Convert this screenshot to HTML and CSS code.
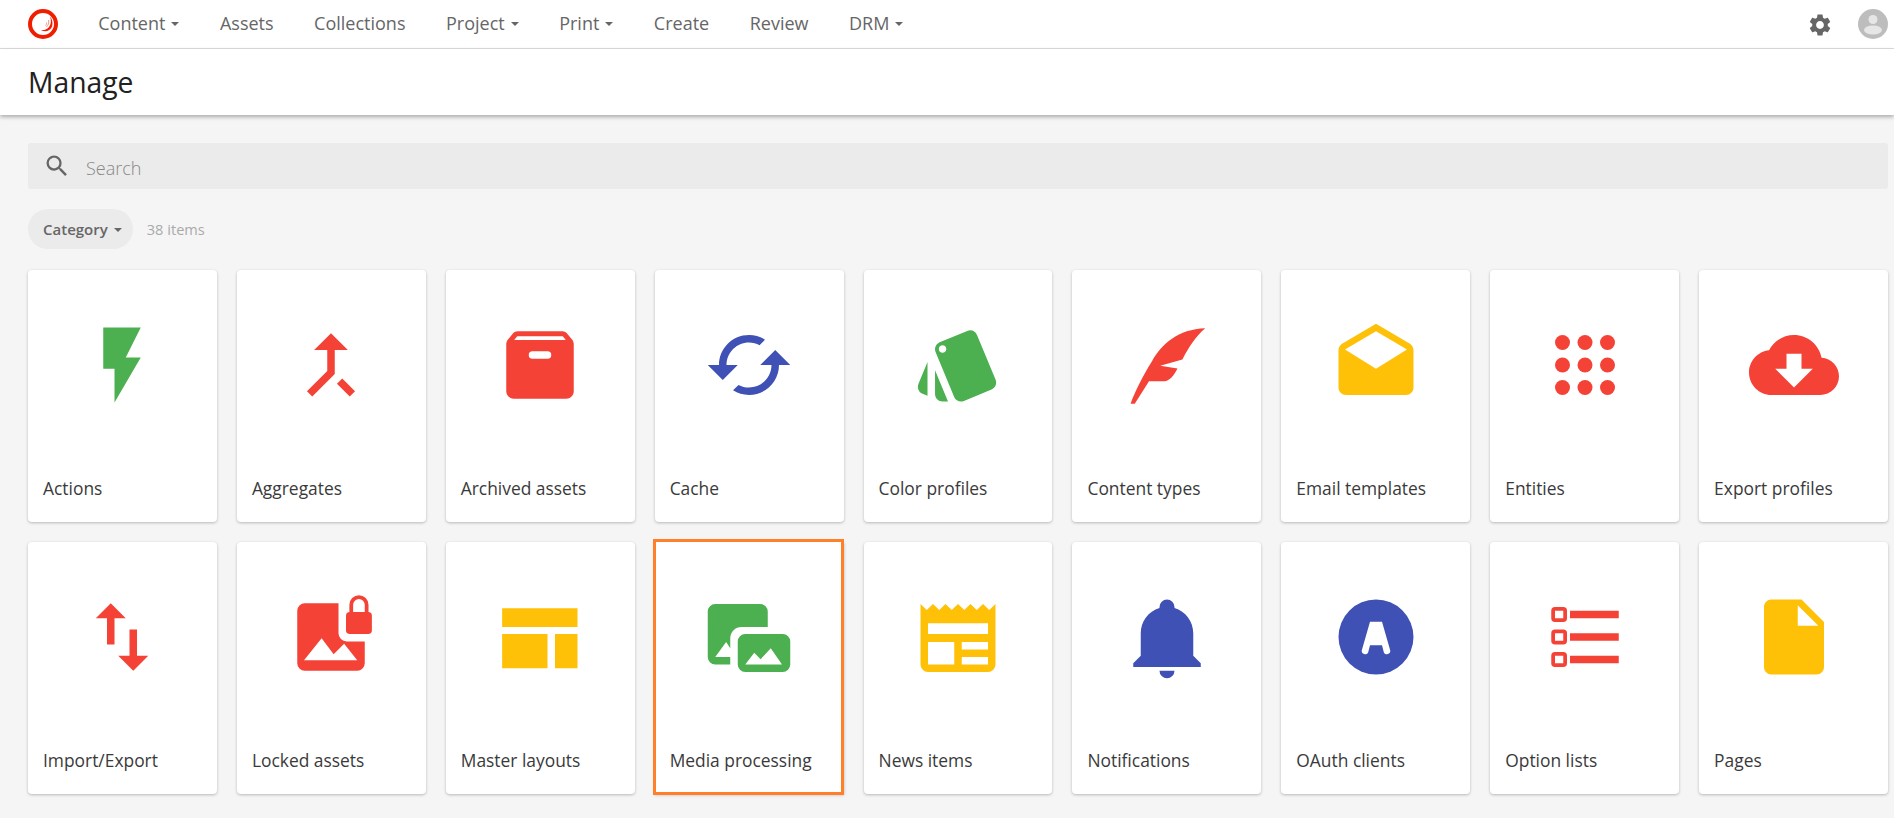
FILE: index.html
```html
<!DOCTYPE html>
<html lang="en">
<head>
<meta charset="utf-8">
<title>Manage</title>
<link rel="stylesheet" href="styles.css">
</head>
<body>
<header class="topbar">
  <svg class="logo" viewBox="0 0 30 30"><circle cx="15" cy="15" r="13" class="logo-ring"/><path class="logo-swirl" d="M22 7.500c1.500 3.500 1.200 7.500-.8 10.200-1.900 2.500-5 3.800-8.200 3.300 3.800 2.300 8.400 1.200 10.300-2 2-3.300 1.500-8.300-1.300-11.500z"/><path class="logo-swirl-line" d="M20.500 11c.6 2.800-.2 5.400-2 7M18.500 13.500c.2 1.300-.2 2.600-1 3.400"/></svg>
  <nav class="nav">
    <a class="nav-item">Content<i class="caret"></i></a>
    <a class="nav-item">Assets</a>
    <a class="nav-item">Collections</a>
    <a class="nav-item">Project<i class="caret"></i></a>
    <a class="nav-item">Print<i class="caret"></i></a>
    <a class="nav-item">Create</a>
    <a class="nav-item">Review</a>
    <a class="nav-item">DRM<i class="caret"></i></a>
  </nav>
  <div class="top-actions">
    <svg class="gear" viewBox="0 0 24 24"><path d="M19.14 12.94c.04-.3.06-.61.06-.94 0-.32-.02-.64-.07-.94l2.03-1.58c.18-.14.23-.41.12-.61l-1.92-3.32c-.12-.22-.37-.29-.59-.22l-2.39.96c-.5-.38-1.03-.7-1.62-.94L14.4 2.81c-.04-.24-.24-.41-.48-.41h-3.84c-.24 0-.43.17-.47.41L9.25 5.35c-.59.24-1.13.57-1.62.94l-2.39-.96c-.22-.08-.47 0-.59.22L2.74 8.87c-.12.21-.08.47.12.61l2.03 1.58c-.05.3-.09.63-.09.94s.02.64.07.94l-2.03 1.58c-.18.14-.23.41-.12.61l1.92 3.32c.12.22.37.29.59.22l2.39-.96c.5.38 1.03.7 1.62.94l.36 2.54c.05.24.24.41.48.41h3.84c.24 0 .44-.17.47-.41l.36-2.54c.59-.24 1.13-.56 1.62-.94l2.39.96c.22.08.47 0 .59-.22l1.92-3.32c.12-.22.07-.47-.12-.61l-2.01-1.58zM12 15.600c-1.980 0-3.600-1.620-3.600-3.600s1.620-3.600 3.600-3.600 3.600 1.620 3.600 3.600-1.620 3.600-3.600 3.600z"/></svg>
    <svg class="avatar" viewBox="0 0 30 30"><circle class="avatar-bg" cx="15" cy="15" r="15"/><circle class="avatar-fg" cx="15" cy="10.500" r="4.500"/><ellipse class="avatar-fg" cx="15" cy="21" rx="9" ry="4.500"/></svg>
  </div>
</header>
<div class="titlebar"><h1 class="title">Manage</h1></div>
<main class="content">
  <div class="search">
    <svg class="search-icon" viewBox="0 0 24 24"><path d="M15.5 14h-.79l-.28-.27A6.470 6.470 0 0 0 16 9.500 6.500 6.500 0 1 0 9.500 16c1.610 0 3.090-.59 4.230-1.570l.27.28v.79l5 4.990L20.490 19l-4.990-5zm-6 0C7.010 14 5 11.990 5 9.500S7.010 5 9.500 5 14 7.010 14 9.500 11.990 14 9.500 14z"/></svg>
    <span class="search-text">Search</span>
  </div>
  <div class="filters">
    <button class="pill">Category<i class="caret"></i></button>
    <span class="count">38 items</span>
  </div>
  <div class="grid">
    <a class="card"><svg class="icon green" viewBox="0 0 24 24"><path d="M7 2v11h3v9l7-12h-4l4-8z"/></svg><span class="label">Actions</span></a>
    <a class="card"><svg class="icon red" viewBox="0 0 24 24"><path d="M17 20.410L18.410 19 15 15.590 13.590 17 17 20.410zM7.500 8H11v5.590L5.590 19 7 20.410l6-6V8h3.500L12 3.500 7.500 8z"/></svg><span class="label">Aggregates</span></a>
    <a class="card"><svg class="icon red" viewBox="0 0 24 24"><path fill-rule="evenodd" d="M20.540 5.230l-1.390-1.680C18.880 3.210 18.470 3 18 3H6c-.47 0-.88.21-1.160.55L3.460 5.230C3.170 5.570 3 6.020 3 6.500V19c0 1.100.9 2 2 2h14c1.100 0 2-.9 2-2V6.500c0-.48-.17-.93-.46-1.270zM5.120 5.300l.81-1h12.140l.81 1H5.120zM10 8.300h4a1 1 0 0 1 0 2h-4a1 1 0 0 1 0-2z"/></svg><span class="label">Archived assets</span></a>
    <a class="card"><svg class="icon indigo" viewBox="0 0 24 24"><path d="M19 8l-4 4h3c0 3.310-2.690 6-6 6-1.010 0-1.970-.25-2.800-.7l-1.460 1.460C8.970 19.540 10.430 20 12 20c4.420 0 8-3.580 8-8h3l-4-4zM6 12c0-3.310 2.690-6 6-6 1.010 0 1.970.25 2.800.7l1.460-1.460C15.030 4.460 13.570 4 12 4c-4.420 0-8 3.580-8 8H1l4 4 4-4H6z"/></svg><span class="label">Cache</span></a>
    <a class="card"><svg class="icon green" viewBox="0 0 24 24"><path d="M2.530 19.650l1.340.56v-9.030l-2.430 5.860c-.41 1.020.08 2.190 1.090 2.610zm19.500-3.700L17.070 3.980c-.31-.75-1.040-1.210-1.810-1.230-.26 0-.53.04-.79.15L7.100 5.950c-.75.31-1.210 1.030-1.230 1.800-.01.27.04.54.15.8l4.960 11.970c.31.76 1.050 1.220 1.830 1.230.26 0 .52-.05.77-.15l7.360-3.050c1.020-.42 1.510-1.590 1.090-2.600zM7.880 8.750c-.55 0-1-.45-1-1s.45-1 1-1 1 .45 1 1-.45 1-1 1zm-2 11c0 1.100.9 2 2 2h1.450l-3.450-8.340v6.340z"/></svg><span class="label">Color profiles</span></a>
    <a class="card"><svg class="icon red" viewBox="0 0 24 24"><path d="M22.200 2.200C15 2.400 10.500 6.500 8 11c-2.500 4-4.500 8-5.700 11.300h1.100l3.800-6h4.100c1.400 0 2.700-1.800 3.500-3.400l-4.600-.7 5.900-1.700c1.900-3.500 3.400-6 6.100-8.300z"/></svg><span class="label">Content types</span></a>
    <a class="card"><svg class="icon amber" viewBox="0 0 24 24"><path d="M21.990 8c0-.72-.37-1.350-.94-1.700L12 1 2.950 6.300C2.380 6.650 2 7.280 2 8v10c0 1.100.9 2 2 2h16c1.100 0 2-.9 2-2l-.01-10zM12 13L3.740 7.840 12 3l8.260 4.840L12 13z"/></svg><span class="label">Email templates</span></a>
    <a class="card"><svg class="icon red" viewBox="0 0 24 24"><circle cx="6" cy="6" r="2"/><circle cx="12" cy="6" r="2"/><circle cx="18" cy="6" r="2"/><circle cx="6" cy="12" r="2"/><circle cx="12" cy="12" r="2"/><circle cx="18" cy="12" r="2"/><circle cx="6" cy="18" r="2"/><circle cx="12" cy="18" r="2"/><circle cx="18" cy="18" r="2"/></svg><span class="label">Entities</span></a>
    <a class="card"><svg class="icon red" viewBox="0 0 24 24"><path d="M19.350 10.040C18.670 6.590 15.640 4 12 4 9.110 4 6.600 5.640 5.350 8.040 2.340 8.360 0 10.910 0 14c0 3.310 2.690 6 6 6h13c2.760 0 5-2.240 5-5 0-2.640-2.050-4.780-4.650-4.960zM17 13l-5 5-5-5h3V9h4v4h3z"/></svg><span class="label">Export profiles</span></a>

    <a class="card"><svg class="icon red" viewBox="0 0 24 24"><path d="M16 17.010V10h-2v7.010h-3L15 21l4-3.990h-3zM9 3L5 6.990h3V14h2V6.990h3L9 3z"/></svg><span class="label">Import/Export</span></a>
    <a class="card"><svg class="icon red" viewBox="0 0 24 24"><path fill-rule="evenodd" d="M5 3h9v8a2.200 2.200 0 0 0 2.200 2.200H21V19a2 2 0 0 1-2 2H5a2 2 0 0 1-2-2V5a2 2 0 0 1 2-2zM4.800 18.200h14.200l-3.500-4.400-2.800 2.800-3.200-4.300z"/><path d="M17 5.300h4.900a1 1 0 0 1 1 1v3.900a1 1 0 0 1-1 1H17a1 1 0 0 1-1-1V6.300a1 1 0 0 1 1-1z"/><path class="shackle" d="M17.400 5.800V3.400a2.050 2.050 0 0 1 4.100 0v2.400"/></svg><span class="label">Locked assets</span></a>
    <a class="card"><svg class="icon amber" viewBox="0 0 24 24"><path d="M1.900 4.300h20.100v5H1.900zM1.900 11.200H14v9.100H1.900zM16 11.200h6v9.100h-6z"/></svg><span class="label">Master layouts</span></a>
    <a class="card card-selected"><svg class="icon green" viewBox="0 0 24 24"><path fill-rule="evenodd" d="M3 3.200h12a2 2 0 0 1 2 2v4.100h-7a3 3 0 0 0-3 3v7H3a2 2 0 0 1-2-2V5.200a2 2 0 0 1 2-2zM3 17.300h4v-2.300l-1.100-1.700z"/><path fill-rule="evenodd" d="M11 11.200h10a2 2 0 0 1 2 2v6.100a2 2 0 0 1-2 2H11a2 2 0 0 1-2-2v-6.100a2 2 0 0 1 2-2zM11 19.300h9.800l-3-4.300-2.700 2.900-1.700-1.700z"/></svg><span class="label">Media processing</span></a>
    <a class="card"><svg class="icon amber" viewBox="0 0 24 24"><path fill-rule="evenodd" d="M2 3.200l1.670 1.600 1.660-1.600L7 4.800l1.670-1.600 1.660 1.600L12 3.200l1.670 1.600 1.660-1.600L17 4.800l1.670-1.600 1.660 1.600L22 3.200v16.100a2 2 0 0 1-2 2H4a2 2 0 0 1-2-2zM4 8.300v2.900h16V8.300zM4 13.300v6h7v-6zM13 13.300v2h7v-2zM13 17.300v2h7v-2z"/></svg><span class="label">News items</span></a>
    <a class="card"><svg class="icon indigo" viewBox="0 0 24 24"><path d="M21 19v1H3v-1l2-2v-6c0-3.100 2.030-5.830 5-6.710V4a2 2 0 1 1 4 0v.29c2.970.88 5 3.610 5 6.710v6l2 2zm-7 2a2 2 0 1 1-4 0z"/></svg><span class="label">Notifications</span></a>
    <a class="card"><svg class="icon indigo" viewBox="0 0 24 24"><path fill-rule="evenodd" d="M12 2a10 10 0 1 1 0 20 10 10 0 0 1 0-20zM10.400 7.900l-2.200 7.700a.9.9 0 0 0 1.700.5l.5-1.900h3.200l.5 1.900a.9.9 0 0 0 1.700-.5l-2.200-7.700z"/></svg><span class="label">OAuth clients</span></a>
    <a class="card"><svg class="icon red" viewBox="0 0 24 24"><path fill-rule="evenodd" d="M8 5h13v2H8zM8 11h13v2H8zM8 17h13v2H8zM4 4h2.200a1 1 0 0 1 1 1v2a1 1 0 0 1-1 1H4a1 1 0 0 1-1-1V5a1 1 0 0 1 1-1zM4 5v2h2.200V5zM4 10h2.200a1 1 0 0 1 1 1v2a1 1 0 0 1-1 1H4a1 1 0 0 1-1-1v-2a1 1 0 0 1 1-1zM4 11v2h2.200v-2zM4 16h2.200a1 1 0 0 1 1 1v2a1 1 0 0 1-1 1H4a1 1 0 0 1-1-1v-2a1 1 0 0 1 1-1zM4 17v2h2.200v-2z"/></svg><span class="label">Option lists</span></a>
    <a class="card"><svg class="icon amber" viewBox="0 0 24 24"><path d="M6 2c-1.100 0-2 .9-2 2v16c0 1.100.9 2 2 2h12c1.100 0 2-.9 2-2V8l-6-6H6zm7 7V3.500L18.500 9H13z"/></svg><span class="label">Pages</span></a>
  </div>
</main>
</body>
</html>
```
FILE: styles.css
```css
* { box-sizing: border-box; }
html, body { height: 100%; }
body {
  margin: 0;
  background: #f5f5f5;
  font-family: "Open Sans", sans-serif;
  color: #333;
  overflow: hidden;
}
.topbar {
  display: flex;
  align-items: center;
  height: 49px;
  padding: 0 6px 1px 28px;
  background: #fff;
  border-bottom: 1px solid #ddd;
}
.logo { width: 30px; height: 30px; flex: none; }
.logo-ring { fill: #fff; stroke: #f01e00; stroke-width: 4; }
.logo-swirl { fill: #f01e00; }
.logo-swirl-line { fill: none; stroke: #f2806f; stroke-width: .8; }
.nav { display: flex; margin-left: 20px; }
.nav-item {
  display: flex;
  align-items: center;
  padding: 0 20.25px 1px;
  font-size: 18px;
  line-height: 24px;
  color: #666;
}
.caret {
  display: inline-block;
  width: 0;
  height: 0;
  margin-left: 6px;
  margin-top: 2px;
  border-top: 4px solid #666;
  border-left: 4px solid transparent;
  border-right: 4px solid transparent;
}
.top-actions { display: flex; align-items: center; margin-left: auto; gap: 25px; }
.gear { width: 26px; height: 26px; margin-top: 2px; fill: #666; }
.avatar { width: 30px; height: 30px; }
.avatar-bg { fill: #bdbdbd; }
.avatar-fg { fill: #e6e6e6; }
.titlebar {
  position: relative;
  height: 66px;
  padding-left: 28px;
  display: flex;
  align-items: center;
  background: #fff;
  box-shadow: 0 2px 4px rgba(0, 0, 0, .3);
}
.title { margin: 0; font-size: 28.3px; font-weight: 400; color: #212121; }
.content { padding: 28px 6px 0 28px; }
.search {
  display: flex;
  align-items: center;
  height: 46px;
  padding-left: 15px;
  background: #ebebeb;
  border-radius: 3px;
}
.search-icon { width: 28px; height: 28px; fill: #666; }
.search-text { margin: 3px 0 0 15px; font-size: 18px; font-weight: 300; color: #888; }
.filters { display: flex; align-items: center; margin: 20px 0 21px; height: 40px; }
.pill {
  display: flex;
  align-items: center;
  height: 40px;
  padding: 0 11px 0 15px;
  border: 0;
  border-radius: 20px;
  background: #ebebeb;
  font: 600 15px "Open Sans", sans-serif;
  color: #666;
}
.count { margin-left: 14px; font-size: 14.6px; color: #aaa; }
.grid {
  display: grid;
  grid-template-columns: repeat(9, 1fr);
  grid-auto-rows: 252px;
  gap: 20px;
}
.card {
  position: relative;
  display: flex;
  flex-direction: column;
  align-items: center;
  padding: 49.5px 15px 0;
  background: #fff;
  border-radius: 4px;
  box-shadow: 0 1px 3px rgba(0, 0, 0, .25);
}
.card-selected { border-radius: 0; }
.card-selected::after {
  content: "";
  position: absolute;
  inset: -3px 0 -1px -2px;
  border: 3px solid #ff7f2a;
}
.icon { width: 90px; height: 90px; flex: none; }
.green { fill: #4caf50; }
.red { fill: #f44336; }
.amber { fill: #ffc107; }
.indigo { fill: #3f51b5; }
.shackle { fill: none; stroke: #f44336; stroke-width: 1; }
.label {
  align-self: flex-start;
  margin-top: 66.5px;
  font-size: 17.4px;
  line-height: 24px;
  color: #3a3a3a;
}
```
